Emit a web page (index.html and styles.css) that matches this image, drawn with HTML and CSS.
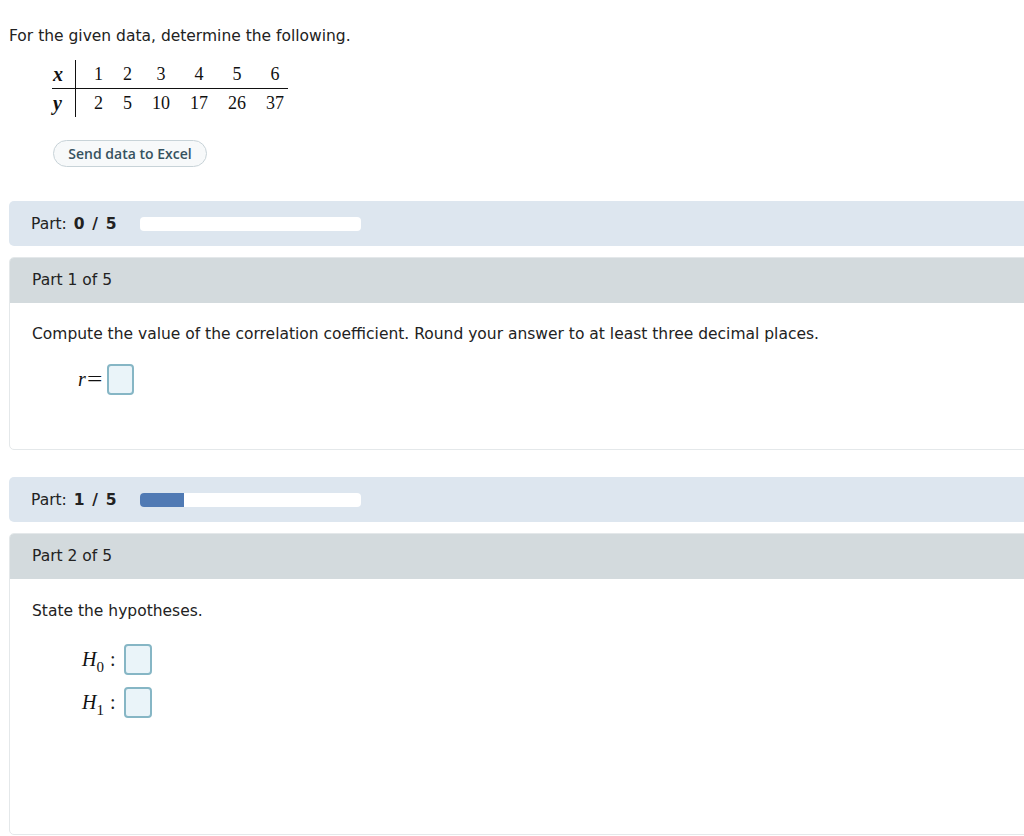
FILE: index.html
```html
<!DOCTYPE html>
<html lang="en">
<head>
<meta charset="utf-8">
<title>Correlation</title>
<link rel="stylesheet" href="styles.css">
</head>
<body>
<div class="page">
  <p class="prompt">For the given data, determine the following.</p>
  <table class="data">
    <tr class="row-x">
      <th class="lbl"><span class="var">x</span></th>
      <td class="first">1</td><td>2</td><td>3</td><td>4</td><td>5</td><td class="last">6</td>
    </tr>
    <tr class="row-y">
      <th class="lbl"><span class="var">y</span></th>
      <td class="first">2</td><td>5</td><td>10</td><td>17</td><td>26</td><td class="last">37</td>
    </tr>
  </table>
  <button class="excel" type="button">Send data to Excel</button>

  <div class="progress">
    <span class="plabel">Part: <b>0 / 5</b></span>
    <div class="track"><div class="fill" style="width:0%"></div></div>
  </div>
  <section class="part part-1">
    <div class="part-head">Part 1 of 5</div>
    <div class="part-body">
      <p class="q">Compute the value of the correlation coefficient. Round your answer to at least three decimal places.</p>
      <div class="answer r-line">
        <span class="math"><i>r</i><span class="eq">=</span></span><span class="ibox"></span>
      </div>
    </div>
  </section>

  <div class="progress">
    <span class="plabel">Part: <b>1 / 5</b></span>
    <div class="track"><div class="fill" style="width:20%"></div></div>
  </div>
  <section class="part part-2">
    <div class="part-head">Part 2 of 5</div>
    <div class="part-body">
      <p class="q">State the hypotheses.</p>
      <div class="hyps">
        <div class="hyp"><span class="math"><i>H</i><sub>0</sub></span><span class="colon">:</span><span class="ibox"></span></div>
        <div class="hyp"><span class="math"><i>H</i><sub>1</sub></span><span class="colon">:</span><span class="ibox"></span></div>
      </div>
    </div>
  </section>
</div>
</body>
</html>
```
FILE: styles.css
```css
html { overflow: hidden; }
body {
  margin: 0;
  background: #fff;
  color: #222;
  font-family: "DejaVu Sans", Verdana, sans-serif;
  font-size: 15.5px;
}
.page {
  width: 1040px;
  padding-left: 9px;
}
.prompt {
  margin: 0;
  padding-top: 27px;
  line-height: 18px;
}

/* data table */
.data {
  margin: 15px 0 0 43px;
  border-collapse: collapse;
  font-family: "Liberation Serif", "Times New Roman", serif;
  font-size: 18px;
  color: #111;
}
.data th, .data td {
  padding: 0 10px;
  text-align: center;
  font-weight: normal;
}
.data .row-x th, .data .row-x td { height: 28px; border-bottom: 1px solid #111; }
.data .row-y th, .data .row-y td { height: 28px; }
.data .lbl {
  text-align: left;
  padding: 0 12px 0 1px;
  border-right: 1.5px solid #111;
}
.var {
  font-family: "Liberation Serif", "DejaVu Serif", serif;
  font-style: italic;
  font-weight: 700;
  font-size: 20px;
}
.data td.first { padding-left: 18px; }
.data td.last { padding-right: 4px; }

.excel {
  display: block;
  margin: 23px 0 0 44px;
  width: 154px;
  height: 27px;
  border: 1px solid #c8d3d8;
  border-radius: 14px;
  background: #f7f9fa;
  color: #36525f;
  font-family: "Open Sans", Lato, sans-serif;
  font-weight: 600;
  font-size: 14px;
  padding: 0;
}

/* progress */
.progress {
  display: flex;
  align-items: center;
  height: 45px;
  margin-top: 34px;
  padding-left: 22px;
  background: #dde6ef;
  border-radius: 5px 0 0 5px;
}
.progress + .part { margin-top: 11px; }
.part + .progress { margin-top: 27px; }
.plabel { width: 109px; }
.plabel b { font-weight: bold; letter-spacing: 1.2px; margin-left: 2px; }
.track {
  width: 221px;
  height: 14px;
  background: #fff;
  border-radius: 4px;
  overflow: hidden;
}
.fill {
  height: 100%;
  background: #507ab4;
}

/* part boxes */
.part {
  border: 1px solid #e4e8ea;
  border-radius: 5px;
  overflow: hidden;
}
.part-head {
  height: 45px;
  line-height: 45px;
  padding-left: 22px;
  background: #d3dadd;
  color: #222;
}
.part-body {
  padding: 22px 22px 0;
}
.q {
  margin: 0;
  line-height: 18px;
}
.part-1 .part-body { padding-bottom: 54px; }
.part-2 .part-body { padding-top: 23px; padding-bottom: 116px; }

.math {
  font-family: "Liberation Serif", "Times New Roman", serif;
  font-size: 20px;
  color: #111;
}
.math sub {
  font-size: 15px;
  vertical-align: -6px;
  line-height: 0;
}
.eq {
  display: inline-block;
  font-size: 21px;
  margin-left: 1px;
  transform: scaleX(1.3);
  transform-origin: left center;
}
.ibox {
  display: inline-block;
  box-sizing: border-box;
  width: 27px;
  height: 31px;
  border: 2px solid #86b6c5;
  border-radius: 4px;
  background: #eaf4f9;
  vertical-align: middle;
}
.answer {
  display: flex;
  align-items: center;
  margin-top: 21px;
  padding-left: 46px;
  height: 31px;
}
.r-line .ibox { margin-left: 8px; }
.hyps {
  margin-top: 24px;
  padding-left: 50px;
  display: flex;
  flex-direction: column;
  gap: 12px;
}
.hyp {
  display: flex;
  align-items: center;
  height: 31px;
}
.hyp .colon {
  font-family: "Liberation Serif", serif;
  font-size: 20px;
  margin: 0 8px 0 6px;
}
.hyp .ibox { width: 28px; }
```
